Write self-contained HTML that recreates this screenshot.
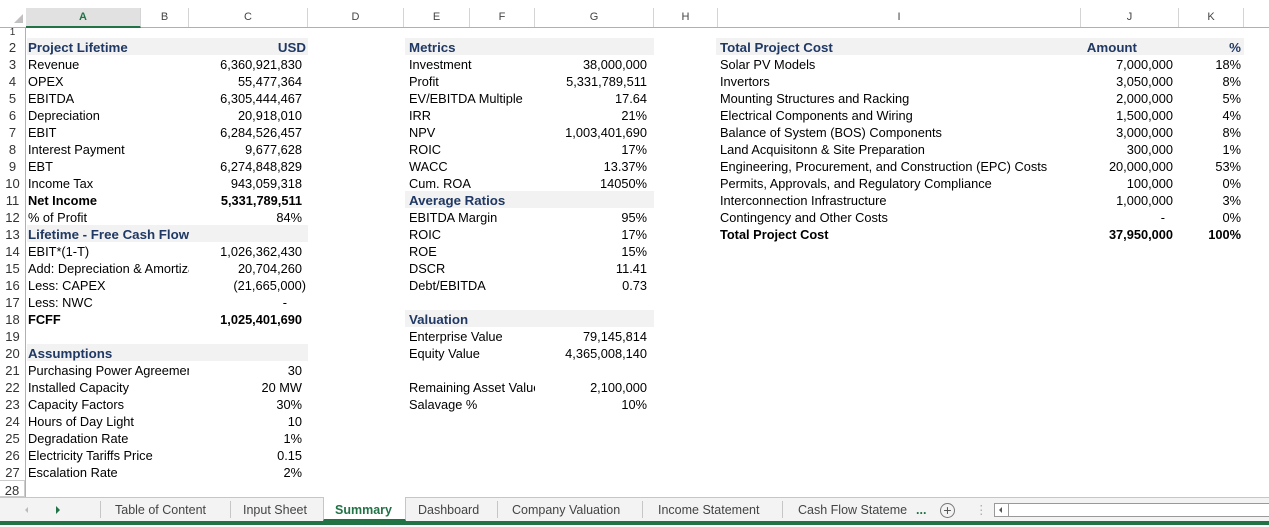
<!DOCTYPE html>
<html><head><meta charset="utf-8"><style>
body{margin:0;width:1269px;height:527px;overflow:hidden;background:#fff;font-family:"Liberation Sans",Arial,sans-serif;font-size:12.8px;color:#000;position:relative}
div{position:absolute;white-space:nowrap;box-sizing:border-box}
.c{height:17px;line-height:19px}
.A{left:28px;width:161px;overflow:hidden}
.C{left:190px;width:116px;text-align:right}
.Cp{left:190px;width:112px;text-align:right}
.E{left:409px}
.G{left:535px;width:112px;text-align:right}
.I{left:720px}
.J{left:1085px;width:88px;text-align:right}
.K{left:1180px;width:61px;text-align:right}
.b{font-weight:bold}
.h{font-weight:bold;color:#1f3864;font-size:13.3px}
.bar{background:#f2f2f2;height:17px}
.rn{left:0;width:25px;text-align:center;color:#333;height:17px;line-height:19px;font-size:13px}
.ch{top:8px;height:19px;line-height:19px;text-align:center;color:#444;font-size:11px;border-right:1px solid #d4d4d4}
.tab{top:499px;height:22px;line-height:22px;color:#444;font-size:12.5px}
.sep{top:501px;width:1px;height:17px;background:#c6c6c6}
</style></head><body>
<div style="left:0;top:8px;width:1269px;height:20px;border-bottom:1px solid #b0b0b0"></div>
<div style="left:14px;top:14px;width:0;height:0;border-left:9px solid transparent;border-bottom:9px solid #c0c0c0"></div>
<div class="ch" style="left:26px;width:115px;background:#e1e1e1;color:#217346;font-weight:bold;border-bottom:2px solid #217346;height:20px">A</div>
<div class="ch" style="left:141px;width:48px">B</div>
<div class="ch" style="left:189px;width:119px">C</div>
<div class="ch" style="left:308px;width:96px">D</div>
<div class="ch" style="left:404px;width:66px">E</div>
<div class="ch" style="left:470px;width:65px">F</div>
<div class="ch" style="left:535px;width:119px">G</div>
<div class="ch" style="left:654px;width:64px">H</div>
<div class="ch" style="left:718px;width:363px">I</div>
<div class="ch" style="left:1081px;width:98px">J</div>
<div class="ch" style="left:1179px;width:65px">K</div>
<div style="left:25px;top:28px;width:1px;height:470px;background:#b0b0b0"></div>
<div class="rn" style="top:27px;height:11px;line-height:11px;font-size:10px">1</div>
<div class="rn" style="top:38px">2</div><div class="rn" style="top:55px">3</div><div class="rn" style="top:72px">4</div><div class="rn" style="top:89px">5</div><div class="rn" style="top:106px">6</div><div class="rn" style="top:123px">7</div><div class="rn" style="top:140px">8</div><div class="rn" style="top:157px">9</div><div class="rn" style="top:174px">10</div><div class="rn" style="top:191px">11</div><div class="rn" style="top:208px">12</div><div class="rn" style="top:225px">13</div><div class="rn" style="top:242px">14</div><div class="rn" style="top:259px">15</div><div class="rn" style="top:276px">16</div><div class="rn" style="top:293px">17</div><div class="rn" style="top:310px">18</div><div class="rn" style="top:327px">19</div><div class="rn" style="top:344px">20</div><div class="rn" style="top:361px">21</div><div class="rn" style="top:378px">22</div><div class="rn" style="top:395px">23</div><div class="rn" style="top:412px">24</div><div class="rn" style="top:429px">25</div><div class="rn" style="top:446px">26</div><div class="rn" style="top:463px">27</div><div class="rn" style="top:480px;border:1px solid #ccc;border-left:0">28</div>
<div class="bar" style="left:27px;top:38px;width:281px"></div>
<div class="bar" style="left:405px;top:38px;width:249px"></div>
<div class="bar" style="left:716px;top:38px;width:528px"></div>
<div class="bar" style="left:27px;top:225px;width:281px"></div>
<div class="bar" style="left:405px;top:191px;width:249px"></div>
<div class="bar" style="left:405px;top:310px;width:249px"></div>
<div class="bar" style="left:27px;top:344px;width:281px"></div>
<div class="c A h" style="top:38px;width:200px">Project Lifetime</div><div class="c C h" style="top:38px">USD</div>
<div class="c A" style="top:55px">Revenue</div><div class="c Cp" style="top:55px">6,360,921,830</div>
<div class="c A" style="top:72px">OPEX</div><div class="c Cp" style="top:72px">55,477,364</div>
<div class="c A" style="top:89px">EBITDA</div><div class="c Cp" style="top:89px">6,305,444,467</div>
<div class="c A" style="top:106px">Depreciation</div><div class="c Cp" style="top:106px">20,918,010</div>
<div class="c A" style="top:123px">EBIT</div><div class="c Cp" style="top:123px">6,284,526,457</div>
<div class="c A" style="top:140px">Interest Payment</div><div class="c Cp" style="top:140px">9,677,628</div>
<div class="c A" style="top:157px">EBT</div><div class="c Cp" style="top:157px">6,274,848,829</div>
<div class="c A" style="top:174px">Income Tax</div><div class="c Cp" style="top:174px">943,059,318</div>
<div class="c A b" style="top:191px">Net Income</div><div class="c Cp b" style="top:191px">5,331,789,511</div>
<div class="c A" style="top:208px">% of Profit</div><div class="c Cp" style="top:208px">84%</div>
<div class="c A h" style="top:225px;width:200px">Lifetime - Free Cash Flow</div>
<div class="c A" style="top:242px">EBIT*(1-T)</div><div class="c Cp" style="top:242px">1,026,362,430</div>
<div class="c A" style="top:259px">Add: Depreciation &amp; Amortization</div><div class="c Cp" style="top:259px">20,704,260</div>
<div class="c A" style="top:276px">Less: CAPEX</div><div class="c C" style="top:276px">(21,665,000)</div>
<div class="c A" style="top:293px">Less: NWC</div><div class="c Cp" style="top:293px;width:97px">-</div>
<div class="c A b" style="top:310px">FCFF</div><div class="c Cp b" style="top:310px">1,025,401,690</div>
<div class="c A h" style="top:344px">Assumptions</div>
<div class="c A" style="top:361px">Purchasing Power Agreement</div><div class="c Cp" style="top:361px">30</div>
<div class="c A" style="top:378px">Installed Capacity</div><div class="c Cp" style="top:378px">20 MW</div>
<div class="c A" style="top:395px">Capacity Factors</div><div class="c Cp" style="top:395px">30%</div>
<div class="c A" style="top:412px">Hours of Day Light</div><div class="c Cp" style="top:412px">10</div>
<div class="c A" style="top:429px">Degradation Rate</div><div class="c Cp" style="top:429px">1%</div>
<div class="c A" style="top:446px">Electricity Tariffs Price</div><div class="c Cp" style="top:446px">0.15</div>
<div class="c A" style="top:463px">Escalation Rate</div><div class="c Cp" style="top:463px">2%</div>
<div class="c E h" style="top:38px">Metrics</div>
<div class="c E" style="top:55px">Investment</div><div class="c G" style="top:55px">38,000,000</div>
<div class="c E" style="top:72px">Profit</div><div class="c G" style="top:72px">5,331,789,511</div>
<div class="c E" style="top:89px">EV/EBITDA Multiple</div><div class="c G" style="top:89px">17.64</div>
<div class="c E" style="top:106px">IRR</div><div class="c G" style="top:106px">21%</div>
<div class="c E" style="top:123px">NPV</div><div class="c G" style="top:123px">1,003,401,690</div>
<div class="c E" style="top:140px">ROIC</div><div class="c G" style="top:140px">17%</div>
<div class="c E" style="top:157px">WACC</div><div class="c G" style="top:157px">13.37%</div>
<div class="c E" style="top:174px">Cum. ROA</div><div class="c G" style="top:174px">14050%</div>
<div class="c E h" style="top:191px">Average Ratios</div>
<div class="c E" style="top:208px">EBITDA Margin</div><div class="c G" style="top:208px">95%</div>
<div class="c E" style="top:225px">ROIC</div><div class="c G" style="top:225px">17%</div>
<div class="c E" style="top:242px">ROE</div><div class="c G" style="top:242px">15%</div>
<div class="c E" style="top:259px">DSCR</div><div class="c G" style="top:259px">11.41</div>
<div class="c E" style="top:276px">Debt/EBITDA</div><div class="c G" style="top:276px">0.73</div>
<div class="c E h" style="top:310px">Valuation</div>
<div class="c E" style="top:327px">Enterprise Value</div><div class="c G" style="top:327px">79,145,814</div>
<div class="c E" style="top:344px">Equity Value</div><div class="c G" style="top:344px">4,365,008,140</div>
<div class="c E" style="top:378px;width:126px;overflow:hidden">Remaining Asset Value</div><div class="c G" style="top:378px">2,100,000</div>
<div class="c E" style="top:395px">Salavage %</div><div class="c G" style="top:395px">10%</div>
<div class="c I h" style="top:38px">Total Project Cost</div><div class="c J h" style="top:38px;width:52px">Amount</div><div class="c K h" style="top:38px">%</div>
<div class="c I" style="top:55px">Solar PV Models</div><div class="c J" style="top:55px">7,000,000</div><div class="c K" style="top:55px">18%</div>
<div class="c I" style="top:72px">Invertors</div><div class="c J" style="top:72px">3,050,000</div><div class="c K" style="top:72px">8%</div>
<div class="c I" style="top:89px">Mounting Structures and Racking</div><div class="c J" style="top:89px">2,000,000</div><div class="c K" style="top:89px">5%</div>
<div class="c I" style="top:106px">Electrical Components and Wiring</div><div class="c J" style="top:106px">1,500,000</div><div class="c K" style="top:106px">4%</div>
<div class="c I" style="top:123px">Balance of System (BOS) Components</div><div class="c J" style="top:123px">3,000,000</div><div class="c K" style="top:123px">8%</div>
<div class="c I" style="top:140px">Land Acquisitonn &amp; Site Preparation</div><div class="c J" style="top:140px">300,000</div><div class="c K" style="top:140px">1%</div>
<div class="c I" style="top:157px">Engineering, Procurement, and Construction (EPC) Costs</div><div class="c J" style="top:157px">20,000,000</div><div class="c K" style="top:157px">53%</div>
<div class="c I" style="top:174px">Permits, Approvals, and Regulatory Compliance</div><div class="c J" style="top:174px">100,000</div><div class="c K" style="top:174px">0%</div>
<div class="c I" style="top:191px">Interconnection Infrastructure</div><div class="c J" style="top:191px">1,000,000</div><div class="c K" style="top:191px">3%</div>
<div class="c I" style="top:208px">Contingency and Other Costs</div><div class="c J" style="top:208px;width:80px">-</div><div class="c K" style="top:208px">0%</div>
<div class="c I b" style="top:225px">Total Project Cost</div><div class="c J b" style="top:225px">37,950,000</div><div class="c K b" style="top:225px">100%</div>
<div style="left:0;top:497px;width:1269px;height:24px;background:#f3f3f3;border-top:1px solid #c6c6c6"></div>
<div style="left:0;top:521px;width:1269px;height:4px;background:#217346"></div>
<div style="left:0;top:525px;width:1269px;height:2px;background:#fff"></div>
<div style="left:25px;top:507px;width:0;height:0;border-top:3px solid transparent;border-bottom:3px solid transparent;border-right:3px solid #bbb"></div>
<div style="left:56px;top:506px;width:0;height:0;border-top:4px solid transparent;border-bottom:4px solid transparent;border-left:4px solid #217346"></div>
<div class="sep" style="left:100px"></div>
<div class="tab" style="left:115px">Table of Content</div>
<div class="sep" style="left:230px"></div>
<div class="tab" style="left:243px">Input Sheet</div>
<div style="left:323px;top:497px;width:83px;height:24px;background:#fff;border-left:1px solid #c6c6c6;border-right:1px solid #c6c6c6;border-bottom:2px solid #217346"></div>
<div class="tab" style="left:335px;color:#217346;font-weight:bold">Summary</div>
<div class="tab" style="left:418px">Dashboard</div>
<div class="sep" style="left:497px"></div>
<div class="tab" style="left:512px">Company Valuation</div>
<div class="sep" style="left:642px"></div>
<div class="tab" style="left:658px">Income Statement</div>
<div class="sep" style="left:782px"></div>
<div class="tab" style="left:798px">Cash Flow Stateme</div>
<div class="tab" style="left:916px;color:#217346;font-weight:bold">...</div>
<div style="left:940px;top:503px;width:15px;height:15px;border:1px solid #777;border-radius:50%;text-align:center;line-height:13px;font-size:14px;color:#555">+</div>
<div class="tab" style="left:975px;color:#aaa">⋮</div>
<div style="left:994px;top:503px;width:280px;height:14px;border:1px solid #999;background:#fff"></div>
<div style="left:1008px;top:503px;width:1px;height:14px;background:#999"></div>
<div style="left:999px;top:507px;width:0;height:0;border-top:3px solid transparent;border-bottom:3px solid transparent;border-right:3px solid #555"></div>
</body></html>
